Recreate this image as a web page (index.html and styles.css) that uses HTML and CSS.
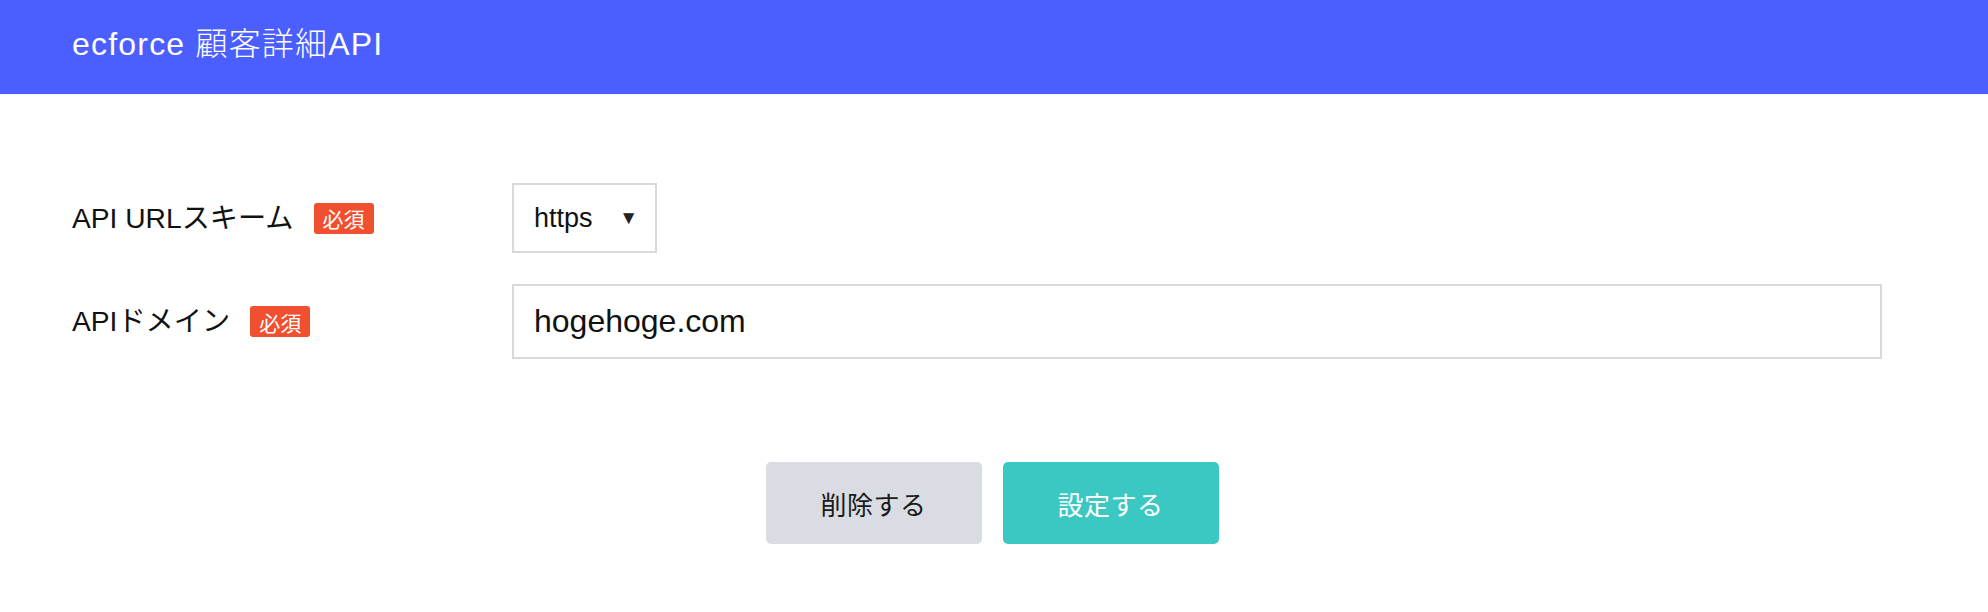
FILE: index.html
```html
<!DOCTYPE html>
<html lang="ja">
<head>
<meta charset="utf-8">
<title>ecforce 顧客詳細API</title>
<link rel="stylesheet" href="styles.css">
</head>
<body>
<header class="topbar">
  <h1 class="topbar-title">ecforce 顧客詳細API</h1>
</header>
<main class="content">
  <form class="form">
    <div class="form-row form-row-scheme">
      <div class="form-label">
        <span class="label-text">API URLスキーム</span>
        <span class="badge">必須</span>
      </div>
      <div class="form-field">
        <div class="select-box">
          <span class="select-value">https</span>
          <span class="select-arrow">▼</span>
        </div>
      </div>
    </div>
    <div class="form-row form-row-domain">
      <div class="form-label">
        <span class="label-text">APIドメイン</span>
        <span class="badge">必須</span>
      </div>
      <div class="form-field">
        <input class="text-input" type="text" value="hogehoge.com">
      </div>
    </div>
    <div class="actions">
      <button type="button" class="btn btn-delete">削除する</button>
      <button type="button" class="btn btn-submit">設定する</button>
    </div>
  </form>
</main>
</body>
</html>
```
FILE: styles.css
```css
html, body {
  margin: 0;
  padding: 0;
  background: #ffffff;
}
body {
  font-family: "Liberation Sans", "Noto Sans CJK JP", sans-serif;
  color: #111111;
}
.topbar {
  height: 94px;
  background: #4b5eff;
  display: flex;
  align-items: center;
  padding-left: 72px;
  padding-bottom: 6px;
  box-sizing: border-box;
}
.topbar-title {
  margin: 0;
  font-size: 32px;
  font-weight: 300;
  letter-spacing: 1.2px;
  color: #ffffff;
  line-height: 1;
}
.content {
  padding-top: 89px;
}
.form {
  display: flex;
  flex-direction: column;
}
.form-row {
  display: grid;
  grid-template-columns: 440px 1370px;
  align-items: center;
  padding-left: 72px;
}
.form-row-domain {
  margin-top: 31px;
}
.form-label {
  display: flex;
  align-items: center;
  gap: 20px;
}
.label-text {
  font-size: 28.2px;
  line-height: 1;
  color: #111111;
}
.badge {
  display: inline-flex;
  align-items: center;
  justify-content: center;
  width: 60px;
  height: 31px;
  background: #f0502f;
  color: #ffffff;
  font-family: "Noto Sans CJK JP", sans-serif;
  font-size: 21px;
  border-radius: 3px;
  box-sizing: border-box;
}
.select-box {
  width: 145px;
  height: 70px;
  border: 2px solid #d9d9d9;
  box-sizing: border-box;
  display: flex;
  align-items: center;
  justify-content: space-between;
  padding: 0 17px 0 20px;
  font-size: 27px;
  color: #111111;
}
.select-arrow {
  font-size: 19px;
  color: #222222;
}
.text-input {
  display: block;
  width: 1370px;
  height: 75px;
  border: 2px solid #d9d9d9;
  box-sizing: border-box;
  padding: 0 20px;
  font-family: "Liberation Sans", sans-serif;
  font-size: 32px;
  color: #111111;
  outline: none;
  border-radius: 0;
}
.actions {
  display: flex;
  justify-content: center;
  gap: 21px;
  margin-top: 103px;
  padding-right: 4px;
}
.btn {
  width: 216px;
  height: 82px;
  border: none;
  border-radius: 5px;
  font-family: "Noto Sans CJK JP", sans-serif;
  font-size: 26px;
  letter-spacing: 0.5px;
  cursor: pointer;
}
.btn-delete {
  background: #d9dce2;
  color: #1a1a1a;
}
.btn-submit {
  background: #3cc8c2;
  color: #ffffff;
}
```
